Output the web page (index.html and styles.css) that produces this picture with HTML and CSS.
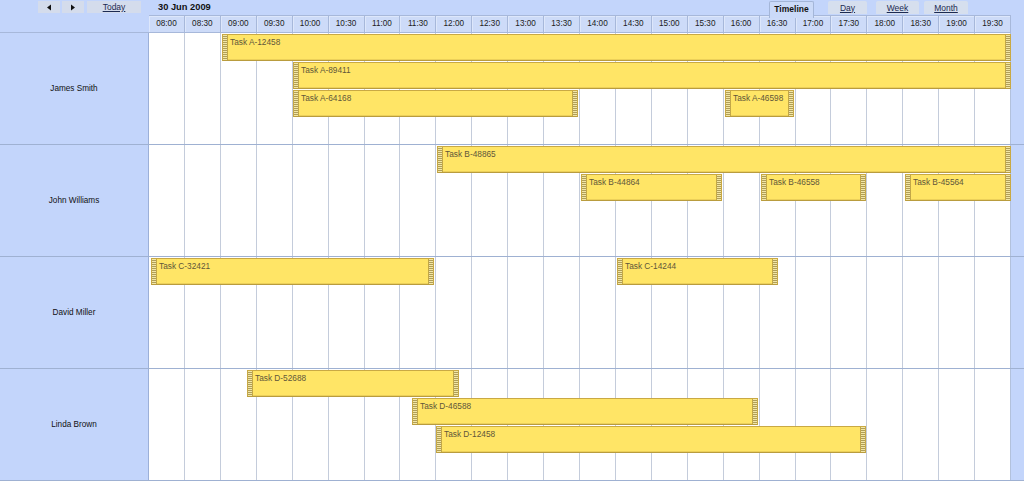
FILE: index.html
```html
<!DOCTYPE html>
<html>
<head>
<meta charset="utf-8">
<link rel="stylesheet" href="styles.css">
</head>
<body>
<div class="scheduler">
  <div class="topbar">
    <div class="nav">
      <button class="btn arrow"><svg width="6" height="7" viewBox="0 0 6 7"><path d="M5 0.5 L1 3.5 L5 6.5 Z" fill="#111"/></svg></button>
      <button class="btn arrow"><svg width="6" height="7" viewBox="0 0 6 7"><path d="M1 0.5 L5 3.5 L1 6.5 Z" fill="#111"/></svg></button>
      <button class="btn today">Today</button>
      <span class="date">30 Jun 2009</span>
    </div>
    <div class="tabs">
      <span class="tab active">Timeline</span>
      <span class="tab">Day</span>
      <span class="tab">Week</span>
      <span class="tab">Month</span>
    </div>
  </div>

  <div class="header">
    <div class="corner"></div>
    <div class="times">
      <div>08:00</div><div>08:30</div><div>09:00</div><div>09:30</div><div>10:00</div><div>10:30</div>
      <div>11:00</div><div>11:30</div><div>12:00</div><div>12:30</div><div>13:00</div><div>13:30</div>
      <div>14:00</div><div>14:30</div><div>15:00</div><div>15:30</div><div>16:00</div><div>16:30</div>
      <div>17:00</div><div>17:30</div><div>18:00</div><div>18:30</div><div>19:00</div><div>19:30</div>
    </div>
  </div>

  <div class="row">
    <div class="name">James Smith</div>
    <div class="lane">
      <div class="lines"><i></i><i></i><i></i><i></i><i></i><i></i><i></i><i></i><i></i><i></i><i></i><i></i><i></i><i></i><i></i><i></i><i></i><i></i><i></i><i></i><i></i><i></i><i></i><i></i></div>
      <div class="task l0" style="left:73px;width:789px"><span>Task A-12458</span></div>
      <div class="task l1" style="left:144px;width:718px"><span>Task A-89411</span></div>
      <div class="task l2" style="left:144px;width:285px"><span>Task A-64168</span></div>
      <div class="task l2" style="left:576px;width:69px"><span>Task A-46598</span></div>
    </div>
  </div>

  <div class="row">
    <div class="name">John Williams</div>
    <div class="lane">
      <div class="lines"><i></i><i></i><i></i><i></i><i></i><i></i><i></i><i></i><i></i><i></i><i></i><i></i><i></i><i></i><i></i><i></i><i></i><i></i><i></i><i></i><i></i><i></i><i></i><i></i></div>
      <div class="task l0" style="left:288px;width:574px"><span>Task B-48865</span></div>
      <div class="task l1" style="left:432px;width:141px"><span>Task B-44864</span></div>
      <div class="task l1" style="left:612px;width:105px"><span>Task B-46558</span></div>
      <div class="task l1" style="left:756px;width:106px"><span>Task B-45564</span></div>
    </div>
  </div>

  <div class="row">
    <div class="name">David Miller</div>
    <div class="lane">
      <div class="lines"><i></i><i></i><i></i><i></i><i></i><i></i><i></i><i></i><i></i><i></i><i></i><i></i><i></i><i></i><i></i><i></i><i></i><i></i><i></i><i></i><i></i><i></i><i></i><i></i></div>
      <div class="task l0" style="left:2px;width:283px"><span>Task C-32421</span></div>
      <div class="task l0" style="left:468px;width:161px"><span>Task C-14244</span></div>
    </div>
  </div>

  <div class="row">
    <div class="name">Linda Brown</div>
    <div class="lane">
      <div class="lines"><i></i><i></i><i></i><i></i><i></i><i></i><i></i><i></i><i></i><i></i><i></i><i></i><i></i><i></i><i></i><i></i><i></i><i></i><i></i><i></i><i></i><i></i><i></i><i></i></div>
      <div class="task l0" style="left:98px;width:212px"><span>Task D-52688</span></div>
      <div class="task l1" style="left:263px;width:346px"><span>Task D-46588</span></div>
      <div class="task l2" style="left:287px;width:430px"><span>Task D-12458</span></div>
    </div>
  </div>
</div>
</body>
</html>
```

FILE: styles.css
```css
* { box-sizing: border-box; }
html, body {
  margin: 0;
  padding: 0;
  background: #c3d5fb;
  font-family: "Liberation Sans", Arial, sans-serif;
  font-size: 8px;
  color: #111;
}
.scheduler {
  width: 1024px;
  height: 481px;
  overflow: hidden;
}
.topbar {
  height: 15px;
  display: flex;
  justify-content: space-between;
  align-items: flex-start;
  position: relative;
  z-index: 2;
}
.nav {
  display: flex;
  align-items: flex-start;
  padding-left: 38px;
  padding-top: 1px;
}
.btn {
  height: 12px;
  border: none;
  background: #d4dcec;
  font-family: inherit;
  font-size: 8.5px;
  padding: 0;
  margin: 0 2px 0 0;
  display: flex;
  align-items: center;
  justify-content: center;
  color: #1c2a52;
}
.btn.arrow { width: 22px; }
.btn.arrow + .btn.arrow { margin-right: 3px; }
.btn.today {
  width: 54px;
  text-decoration: underline;
}
.date {
  font-weight: bold;
  font-size: 9.3px;
  margin-left: 15px;
  line-height: 12px;
  color: #111;
}
.tabs {
  display: flex;
  align-items: flex-start;
  padding-right: 56px;
  padding-top: 1px;
}
.tab {
  height: 13px;
  background: #d6dfee;
  margin-left: 9px;
  font-size: 8.5px;
  text-decoration: underline;
  color: #1c2a52;
  display: flex;
  align-items: center;
  justify-content: center;
  border-radius: 2px 2px 0 0;
}
.tab:nth-child(2) { width: 39px; margin-left: 14px; }
.tab:nth-child(3) { width: 43px; }
.tab:nth-child(4) { width: 44px; margin-left: 5px; }
.tab.active {
  width: 45px;
  height: 17px;
  margin-left: 0;
  background: #cbdaf8;
  border: 1px solid #a4b6d8;
  border-bottom: none;
  font-weight: bold;
  text-decoration: none;
  color: #111;
  padding-bottom: 2px;
}
.header {
  display: flex;
  height: 18px;
}
.corner {
  width: 149px;
  border-bottom: 1px solid #a7b8da;
}
.times {
  width: 862px;
  display: grid;
  grid-template-columns: repeat(24, 1fr);
}
.times div {
  border-top: 1px solid #a7b8da;
  border-right: 1px solid #a7b8da;
  border-bottom: 1px solid #a7b8da;
  background: #cddbf8;
  text-align: center;
  line-height: 16px;
  font-size: 8.2px;
  color: #222;
  box-shadow: inset 1px 1px 0 #dde7fb;
}
.row {
  display: flex;
  height: 112px;
  border-bottom: 1px solid #9fb1d2;
}
.name {
  width: 149px;
  border-right: 1px solid #9cb0d8;
  display: flex;
  align-items: center;
  justify-content: center;
  font-size: 8.2px;
  color: #111;
}
.lane {
  width: 862px;
  position: relative;
  background: #fff;
}
.lines {
  display: grid;
  grid-template-columns: repeat(24, 1fr);
  height: 100%;
}
.lines i {
  border-right: 1px solid #c4ccdb;
}
.lines i:last-child {
  border-right: 1px solid #b2c1dc;
}
.task {
  position: absolute;
  height: 27px;
  background: #ffe566;
  border: 1px solid #c9a944;
  border-bottom-color: #b99c3e;
  box-shadow: inset 0 -1px 0 #ecd05a;
  padding: 2px 0 0 7px;
  color: #5f573a;
  font-size: 8.3px;
  white-space: nowrap;
  overflow: hidden;
}
.task::before,
.task::after {
  content: "";
  position: absolute;
  top: 0;
  bottom: 0;
  width: 3px;
  background: repeating-linear-gradient(to bottom, #f3e7a6 0 1px, #b09e58 1px 2px);
}
.task::before { left: 0; border-right: 1px solid #c2a748; width: 4px; }
.task::after { right: 0; border-left: 1px solid #c2a748; width: 4px; }
.l0 { top: 1px; }
.l1 { top: 29px; }
.l2 { top: 57px; }
```
